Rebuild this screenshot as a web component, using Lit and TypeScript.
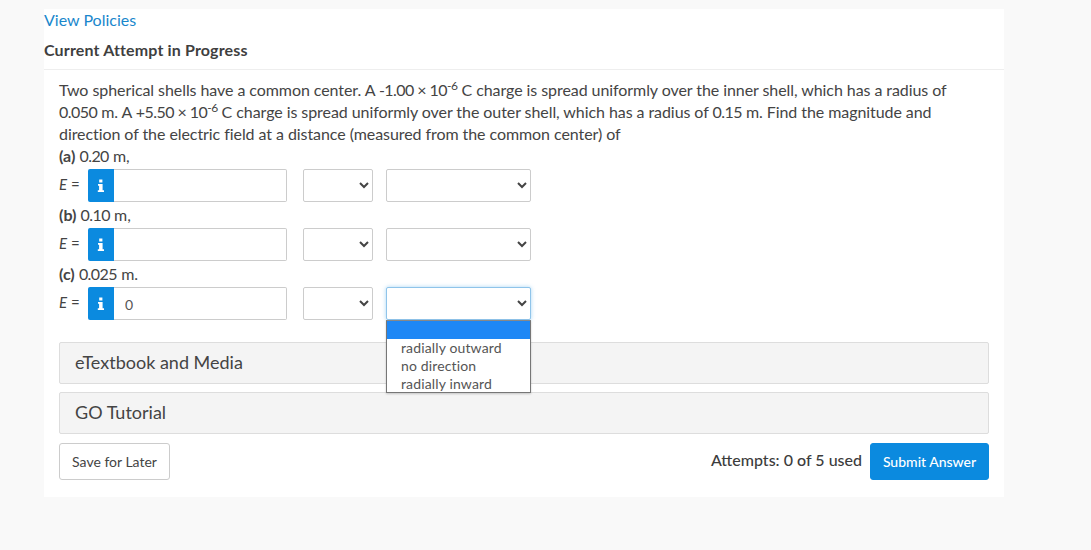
import { LitElement, html, css } from "lit";
import { customElement } from "lit/decorators.js";

@customElement("app-root")
export class AppRoot extends LitElement {
  static styles = css`
    :host {
      display: block;
      min-height: 550px;
      background: #f9f9f9;
      font-family: Lato, "Liberation Sans", sans-serif;
      color: #444;
      font-size: 16px;
      box-sizing: border-box;
      padding: 9px 87px 0 44px;
    }
    .card {
      background: #fff;
      height: 488px;
      display: flex;
      flex-direction: column;
    }
    .head {
      height: 61px;
      border-bottom: 1px solid #eee;
      box-sizing: border-box;
      display: flex;
      flex-direction: column;
    }
    .link {
      color: #1a87cc;
      line-height: 22px;
      text-decoration: none;
    }
    .title {
      font-weight: 700;
      line-height: 22px;
      margin-top: 8px;
      color: #3f3f3f;
      letter-spacing: 0.15px;
    }
    .body {
      padding: 9px 15px 0;
      display: flex;
      flex-direction: column;
    }
    .q {
      line-height: 22px;
      letter-spacing: -0.07px;
      white-space: nowrap;
    }
    .n {
      letter-spacing: -0.55px;
    }
    sup {
      font-size: 12px;
      line-height: 0;
      letter-spacing: -0.5px;
    }
    .part {
      line-height: 22px;
      height: 22px;
    }
    .row {
      display: flex;
      align-items: stretch;
      height: 33px;
      margin: 2px 0 2px;
      position: relative;
    }
    .label {
      width: 29px;
      font-size: 15px;
      line-height: 30px;
    }
    .info {
      width: 26px;
      background: #0b8adf;
      border-radius: 2px 0 0 2px;
      color: #fff;
      display: flex;
      align-items: center;
      justify-content: center;
    }
    .info svg {
      display: block;
    }
    .input {
      width: 173px;
      box-sizing: border-box;
      border: 1px solid #ccc;
      border-left: 0;
      font: 14px Lato, sans-serif;
      color: #555;
      padding: 1px 0 0 11px;
      outline: none;
      background: #fff;
      border-radius: 0 2px 2px 0;
    }
    select {
      box-sizing: border-box;
      border: 1px solid #ccc;
      border-radius: 2px;
      background: #fff;
      font: 14px Lato, sans-serif;
      outline: none;
      color: #444;
    }
    .unit {
      width: 70px;
      margin-left: 16px;
    }
    .dir {
      width: 145px;
      margin-left: 13px;
    }
    .dir.focus {
      border-color: #8fc4ea;
      box-shadow: 0 0 4px rgba(11, 138, 223, 0.35);
    }
    .menu {
      position: absolute;
      left: 327px;
      top: 33px;
      width: 145px;
      height: 73px;
      box-sizing: border-box;
      border: 1px solid #767676;
      border-top-color: #888;
      background: #fff;
      box-shadow: 0 1px 2px rgba(0, 0, 0, 0.2);
      font-size: 14px;
      line-height: 18px;
      letter-spacing: 0.14px;
      z-index: 2;
      overflow: hidden;
      color: #555;
    }
    .menu div {
      height: 18px;
      padding-left: 14px;
    }
    .menu .sel {
      background: #1e87f5;
    }
    .acc {
      height: 42px;
      box-sizing: border-box;
      background: #f4f4f4;
      border: 1px solid #ddd;
      border-radius: 2px;
      padding: 0 15px;
      font-size: 18px;
      line-height: 38px;
      margin-bottom: 8px;
      color: #444;
    }
    .acc.first {
      margin-top: 20px;
    }
    .foot {
      display: flex;
      align-items: flex-start;
      margin-top: 1px;
    }
    .btn {
      box-sizing: border-box;
      height: 37px;
      border-radius: 3px;
      font: 14px Lato, sans-serif;
      padding: 0;
    }
    .save {
      width: 111px;
      border: 1px solid #ccc;
      background: #fff;
      color: #444;
    }
    .attempts {
      margin-left: auto;
      margin-right: 8px;
      font-weight: 500;
      line-height: 34px;
      color: #3c3c3c;
    }
    .submit {
      width: 119px;
      border: 1px solid #0b8adf;
      background: #0b8adf;
      color: #fff;
      font-weight: 500;
    }
  `;

  private icon() {
    return html`<svg width="10" height="14" viewBox="0 0 10 14" aria-hidden="true">
      <path fill="#fff" d="M3.2 0.6h3.2v2.8H3.2zM2 5h4.6v6.2H8V13H1.8v-1.8h1.3V6.8H2z"></path>
    </svg>`;
  }

  private row(value: string, open = false) {
    return html`<div class="row">
      <div class="label"><i>E</i> =</div>
      <div class="info">${this.icon()}</div>
      <input class="input" .value=${value} />
      <select class="unit"><option></option></select>
      <select class="dir ${open ? "focus" : ""}"><option></option></select>
      ${open
        ? html`<div class="menu">
            <div class="sel"></div>
            <div>radially outward</div>
            <div>no direction</div>
            <div>radially inward</div>
          </div>`
        : ""}
    </div>`;
  }

  render() {
    return html`<div class="card">
      <div class="head">
        <a class="link">View Policies</a>
        <div class="title">Current Attempt in Progress</div>
      </div>
      <div class="body">
        <div class="q">
          Two spherical shells have a common center. A <span class="n">-1.00 × 10</span><sup>-6</sup> C charge is spread uniformly over the inner shell, which has a radius of<br />
          <span class="n">0.050</span> m. A <span class="n">+5.50 × 10</span><sup>-6</sup> C charge is spread uniformly over the outer shell, which has a radius of <span class="n">0.15</span> m. Find the magnitude and<br />
          direction of the electric field at a distance (measured from the common center) of
        </div>
        <div class="part"><b>(a)</b> <span class="n">0.20</span> m,</div>
        ${this.row("")}
        <div class="part"><b>(b)</b> <span class="n">0.10</span> m,</div>
        ${this.row("")}
        <div class="part"><b>(c)</b> <span class="n">0.025</span> m.</div>
        ${this.row("0", true)}
        <div class="acc first">eTextbook and Media</div>
        <div class="acc">GO Tutorial</div>
        <div class="foot">
          <button class="btn save">Save for Later</button>
          <div class="attempts">Attempts: 0 of 5 used</div>
          <button class="btn submit">Submit Answer</button>
        </div>
      </div>
    </div>`;
  }
}
